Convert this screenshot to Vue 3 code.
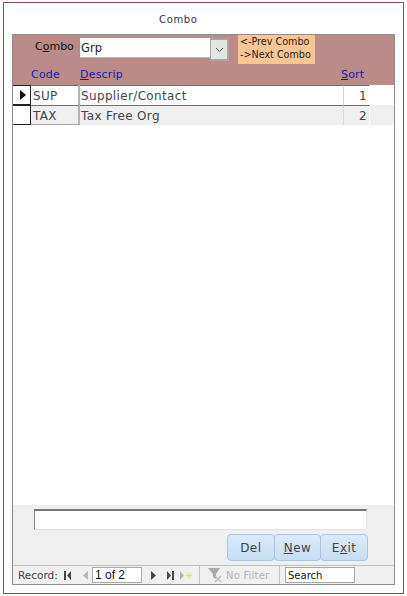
<script setup>
const rows = [
  { code: "SUP", descrip: "Supplier/Contact", sort: 1, current: true },
  { code: "TAX", descrip: "Tax Free Org", sort: 2, current: false },
]
</script>

<template>
  <div class="window">
    <div class="title">Combo</div>
    <div class="form">
      <div class="header">
        <div class="combo-row">
          <span class="combo-label">C<u>o</u>mbo</span>
          <div class="combo-box">
            <span class="combo-value">Grp</span>
            <span class="combo-btn">
              <svg width="9" height="6" viewBox="0 0 9 6"><path d="M1 1l3.500 3.500L8 1" fill="none" stroke="#555" stroke-width="1" /></svg>
            </span>
          </div>
          <div class="hint">&lt;-Prev Combo<br />-&gt;Next Combo</div>
        </div>
        <div class="columns">
          <span class="col-code">Code</span>
          <span class="col-descrip"><u>D</u>escrip</span>
          <span class="col-sort"><u>S</u>ort</span>
        </div>
      </div>

      <div class="body">
        <div v-for="row in rows" :key="row.code" class="row" :class="{ alt: !row.current }">
          <div class="selector">
            <svg v-if="row.current" width="6" height="10" viewBox="0 0 6 10"><path d="M0 0l6 5-6 5z" fill="#000" /></svg>
          </div>
          <div class="cell code">{{ row.code }}</div>
          <div class="cell descrip">{{ row.descrip }}</div>
          <div class="cell sort">{{ row.sort }}</div>
        </div>
      </div>

      <div class="footer">
        <div class="message"></div>
        <div class="buttons">
          <button class="btn">Del</button>
          <button class="btn"><u>N</u>ew</button>
          <button class="btn">E<u>x</u>it</button>
        </div>
      </div>

      <div class="nav">
        <span class="nav-label">Record:</span>
        <svg class="nav-icon first" width="7" height="9" viewBox="0 0 7 9"><path d="M0 0h2v9H0zM7 0v9L3 4.500z" fill="#444" /></svg>
        <svg class="nav-icon prev" width="5" height="9" viewBox="0 0 5 9"><path d="M5 0v9L0 4.500z" fill="#b5b5b5" /></svg>
        <div class="nav-input">1 of 2</div>
        <svg class="nav-icon next" width="5" height="9" viewBox="0 0 5 9"><path d="M0 0v9l5-4.500z" fill="#444" /></svg>
        <svg class="nav-icon last" width="8" height="9" viewBox="0 0 8 9"><path d="M1 0v9l4-4.500zM6 0h2v9H6z" fill="#444" /></svg>
        <svg class="nav-icon new" width="13" height="9" viewBox="0 0 13 9"><path d="M0 0v9l4-4.500z" fill="#b5b5b5" /><path d="M9 1v7M5.500 4.500h7M6.500 2l5 5M11.500 2l-5 5" stroke="#f0dc90" stroke-width="1" /></svg>
        <span class="nav-sep"></span>
        <svg class="filter-icon" width="19" height="15" viewBox="0 0 19 15"><path d="M1 0h12L9 6v5L6 9V6z" fill="#a9a9a9" /><path d="M8 8l6 6M14 8l-6 6" stroke="#bdbdbd" stroke-width="1.500" /></svg>
        <span class="filter-text">No Filter</span>
        <span class="nav-sep second"></span>
        <div class="search">Search</div>
      </div>
    </div>
  </div>
</template>

<style>
html, body {
  margin: 0;
  background: #fff;
}
</style>

<style scoped>
.window {
  box-sizing: border-box;
  width: 401px;
  height: 592px;
  margin: 2px 0 0 3px;
  padding: 0 8px 8px 8px;
  border: 1px solid #8f4b4f;
  display: flex;
  flex-direction: column;
  background: #fff;
  font-family: "DejaVu Sans", sans-serif;
  font-size: 11px;
  color: #222;
}
.title {
  height: 31px;
  line-height: 34px;
  padding-left: 147px;
  font-size: 10px;
  letter-spacing: 0.65px;
  color: #333;
}
.form {
  flex: 1;
  display: flex;
  flex-direction: column;
  border: 1px solid #8c8c8c;
}
.header {
  height: 50px;
  background: #ba8b89;
  display: flex;
  flex-direction: column;
}
.combo-row {
  display: flex;
  align-items: flex-start;
  height: 28px;
}
.combo-label {
  margin: 5px 0 0 22px;
  width: 45px;
  color: #111;
}
.combo-box {
  margin-top: 3px;
  width: 149px;
  height: 20px;
  background: #fff;
  display: flex;
  justify-content: space-between;
  box-sizing: border-box;
  border-bottom: 1px solid #c9b5b4;
}
.combo-value {
  padding: 3px 0 0 1px;
  font-size: 11.500px;
}
.combo-btn {
  width: 16px;
  height: 19px;
  background: #e4e4e4;
  border: 2px solid #a5a5a5;
  border-left-width: 1px;
  display: flex;
  align-items: center;
  justify-content: center;
}
.hint {
  margin-left: 9px;
  width: 77px;
  height: 29px;
  box-sizing: border-box;
  padding-left: 2px;
  background: #fcc692;
  font-size: 9.600px;
  line-height: 13px;
  color: #222;
}
.columns {
  display: flex;
  height: 22px;
  align-items: center;
  color: #1a1aa6;
  letter-spacing: 0.2px;
}
.col-code {
  margin-left: 18px;
  width: 49px;
}
.col-descrip {
  width: 261px;
}
.body {
  flex: 1;
}
.row {
  display: flex;
  height: 20px;
  background: #fff;
  font-size: 12px;
  letter-spacing: 0.3px;
}
.row.alt {
  background: #efefef;
}
.selector {
  width: 18px;
  box-sizing: border-box;
  padding-left: 3px;
  border: 1px solid #222;
  border-left: none;
  display: flex;
  align-items: center;
  justify-content: center;
  background: #fff;
}
.cell {
  box-sizing: border-box;
  line-height: 20px;
  padding-left: 2px;
  color: #444;
  border-top: 1px solid #6f6f6f;
}
.code {
  width: 49px;
  border-right: 2px solid #b4b4b4;
}
.alt .code {
  border-bottom: 1px solid #a8a8a8;
}
.descrip {
  width: 263px;
  padding-left: 1px;
  letter-spacing: 0.35px;
}
.sort {
  width: 27px;
  text-align: right;
  padding-right: 2px;
  border-left: 1px solid #d8d8d8;
  border-right: 1px solid #fff;
}
.footer {
  height: 60px;
  background: #efefef;
  display: flex;
  flex-direction: column;
}
.message {
  box-sizing: border-box;
  width: 333px;
  height: 21px;
  margin: 4px 0 0 21px;
  background: #fff;
  border-top: 2px solid #777;
  border-left: 1px solid #888;
  border-right: 1px solid #e2e2e2;
  border-bottom: 1px solid #e2e2e2;
}
.buttons {
  display: flex;
  justify-content: flex-end;
  margin: 4px 26px 0 0;
}
.btn {
  width: 47.670px;
  height: 27px;
  padding: 0;
  margin-left: -1px;
  border: 1px solid #a9c6e2;
  border-radius: 4px;
  background: linear-gradient(#dcebfa, #c5ddf5);
  font-family: "DejaVu Sans", sans-serif;
  font-size: 12px;
  letter-spacing: 0.5px;
  color: #444;
}
.nav {
  height: 19px;
  box-sizing: border-box;
  display: flex;
  align-items: center;
  background: #f0f0f0;
  border-top: 1px solid #bdbdbd;
  font-size: 10.500px;
  color: #444;
}
.nav-label {
  margin-left: 5px;
  width: 46px;
}
.nav-icon {
  flex: none;
}
.prev {
  margin-left: 12px;
}
.nav-input {
  box-sizing: border-box;
  width: 50px;
  height: 16px;
  margin-left: 4px;
  padding-left: 2px;
  line-height: 15px;
  background: #fff;
  border: 1px solid #a8a8a8;
  color: #111;
  font-family: "Liberation Sans", sans-serif;
  font-size: 12px;
}
.next {
  margin-left: 9px;
}
.last {
  margin-left: 10px;
}
.new {
  margin-left: 6px;
}
.nav-sep {
  width: 1px;
  height: 18px;
  margin-left: 6px;
  background: #c4c4c4;
}
.filter-icon {
  margin-left: 7px;
}
.filter-text {
  width: 52px;
  color: #b3b3b3;
  font-size: 10px;
  letter-spacing: 0.2px;
}
.nav-sep.second {
  margin-left: 1px;
}
.search {
  box-sizing: border-box;
  width: 70px;
  height: 16px;
  margin-left: 5px;
  padding-left: 2px;
  line-height: 15px;
  background: #fff;
  border: 1px solid #a8a8a8;
  color: #111;
  font-size: 10px;
}
</style>
